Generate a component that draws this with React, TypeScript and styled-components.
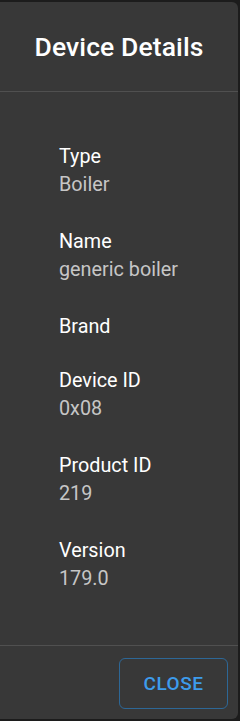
import React from "react";
import styled, { createGlobalStyle } from "styled-components";

const Global = createGlobalStyle`
  html, body {
    margin: 0;
    padding: 0;
    background: #1c1c1c;
    height: 100%;
  }
  body {
    font-family: Roboto, "Liberation Sans", Arial, sans-serif;
    -webkit-font-smoothing: antialiased;
  }
  #root { height: 100%; }
`;

const Screen = styled.div`
  height: 721px;
  padding: 2px 2px 2px 0;
  box-sizing: border-box;
  display: flex;
`;

const Dialog = styled.section`
  flex: 1;
  display: flex;
  flex-direction: column;
  background: #383838;
  border-radius: 0 6px 6px 0;
  overflow: hidden;
  color: #fff;
`;

const Title = styled.h2`
  margin: 0;
  height: 89px;
  display: flex;
  align-items: center;
  justify-content: center;
  font-size: 26.5px;
  font-weight: 500;
  letter-spacing: 0.1px;
  color: #fff;
  border-bottom: 1px solid rgba(255, 255, 255, 0.12);
`;

const Content = styled.div`
  flex: 1;
  overflow: hidden;
  padding: 37px 0 0 59px;
  border-bottom: 1px solid rgba(255, 255, 255, 0.12);
`;

const List = styled.ul`
  list-style: none;
  margin: 0;
  padding: 0;
`;

const Item = styled.li`
  padding: 14px 0 12px;
  display: flex;
  flex-direction: column;
`;

const Label = styled.span`
  font-size: 19.8px;
  line-height: 28px;
  color: #fff;
`;

const Value = styled.span`
  font-size: 19.8px;
  line-height: 28px;
  margin-bottom: 3px;
  color: rgba(255, 255, 255, 0.72);
`;

const Actions = styled.div`
  height: 73px;
  display: flex;
  align-items: flex-start;
  justify-content: flex-end;
  padding: 12px 10px 0 0;
  box-sizing: border-box;
`;

const OutlinedButton = styled.button`
  width: 109px;
  height: 51px;
  background: transparent;
  border: 1px solid rgba(33, 150, 243, 0.5);
  border-radius: 6px;
  color: #3d9cec;
  font-family: Roboto, "Liberation Sans", Arial, sans-serif;
  font-size: 19px;
  font-weight: 500;
  letter-spacing: 0.5px;
  text-transform: uppercase;
  cursor: pointer;
`;

const details: { label: string; value?: string }[] = [
  { label: "Type", value: "Boiler" },
  { label: "Name", value: "generic boiler" },
  { label: "Brand" },
  { label: "Device ID", value: "0x08" },
  { label: "Product ID", value: "219" },
  { label: "Version", value: "179.0" },
];

export default function App() {
  return (
    <>
      <Global />
      <Screen>
        <Dialog>
          <Title>Device Details</Title>
          <Content>
            <List>
              {details.map((d) => (
                <Item key={d.label}>
                  <Label>{d.label}</Label>
                  {d.value && <Value>{d.value}</Value>}
                </Item>
              ))}
            </List>
          </Content>
          <Actions>
            <OutlinedButton>Close</OutlinedButton>
          </Actions>
        </Dialog>
      </Screen>
    </>
  );
}
